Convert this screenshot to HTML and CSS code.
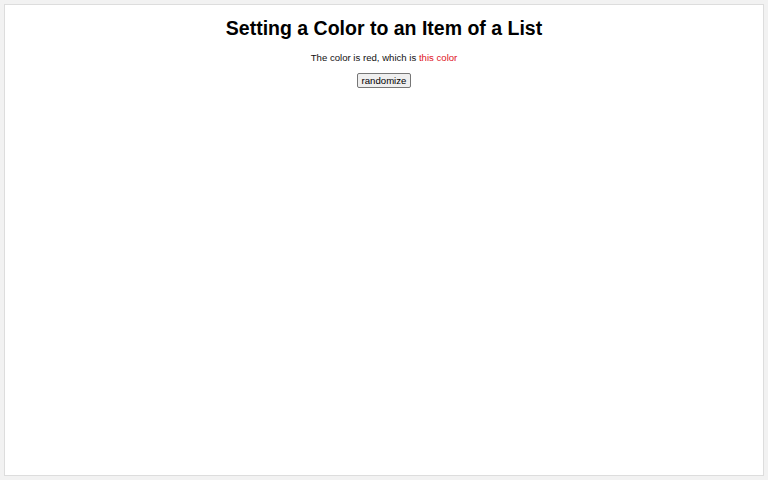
FILE: index.html
```html
<!DOCTYPE html>
<html lang="en">

<head>
    <meta charset="UTF-8">
    <meta name="viewport" content="width=device-width, initial-scale=1.0">
    <link rel="stylesheet" href="styles.css">
</head>

<body>
    <div class="panel">
        <h1 class="title">Setting a Color to an Item of a List</h1>
        <p class="message">The color is red, which is <span class="swatch">this color</span></p>
        <button class="btn-randomize">randomize</button>
    </div>
</body>

</html>
```
FILE: styles.css
```css
body {
    margin: 0;
    padding: 4px 4px 4px 4px;
    background-color: #f2f2f2;
    font-family: 'Liberation Sans', Arial, sans-serif;
}

.panel {
    display: flex;
    flex-direction: column;
    align-items: center;
    height: 472px;
    box-sizing: border-box;
    background-color: #ffffff;
    border: 1px solid #dddddd;
}

.title {
    margin: 12px 0 0 0;
    font-size: 19.5px;
    font-weight: bold;
    color: #000000;
}

.message {
    margin: 12px 0 0 0;
    font-size: 9.6px;
    color: #111111;
}

.swatch {
    color: #e0141e;
}

.btn-randomize {
    margin-top: 10px;
    padding: 1px 4px;
    font-family: 'Liberation Sans', Arial, sans-serif;
    font-size: 9.6px;
    color: #000000;
    background-color: #efefef;
    border: 1px solid #767676;
    border-radius: 2px;
}
```
